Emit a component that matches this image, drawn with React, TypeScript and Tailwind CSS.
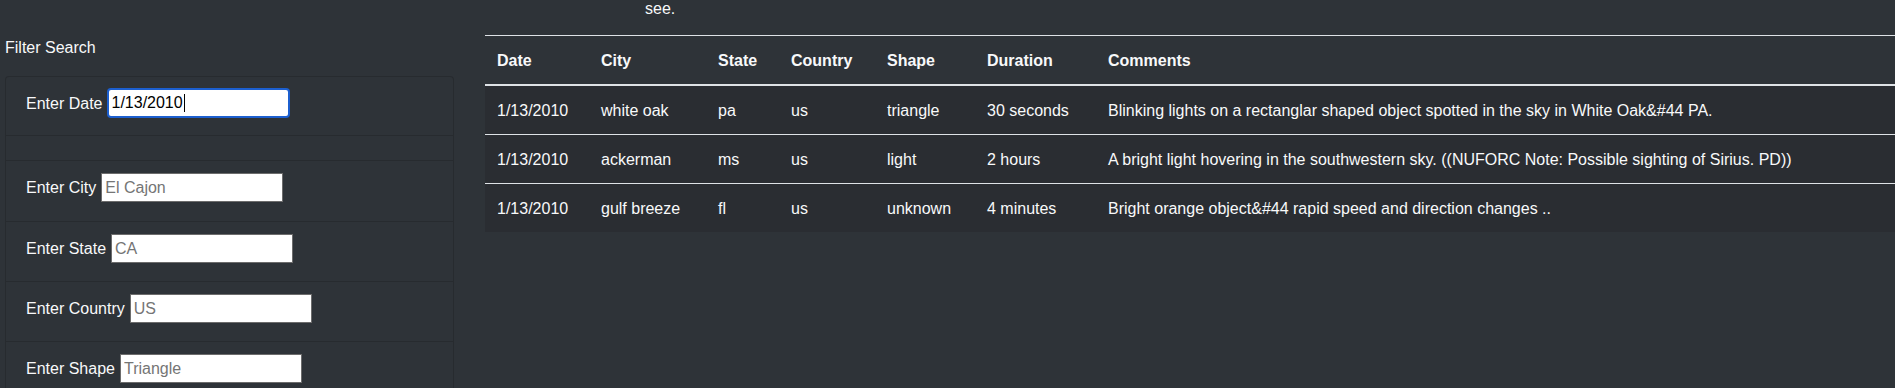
import React from 'react'

// Filter fields shown in the left list below the date row
const filters = [
  { label: 'Enter City', placeholder: 'El Cajon', h: 'h-[61px]' },
  { label: 'Enter State', placeholder: 'CA', h: 'h-[60px]' },
  { label: 'Enter Country', placeholder: 'US', h: 'h-[60px]' },
  { label: 'Enter Shape', placeholder: 'Triangle', h: 'h-[60px]' },
]

const sightings = [
  {
    date: '1/13/2010',
    city: 'white oak',
    state: 'pa',
    country: 'us',
    shape: 'triangle',
    duration: '30 seconds',
    comments: 'Blinking lights on a rectanglar shaped object spotted in the sky in White Oak&#44 PA.',
  },
  {
    date: '1/13/2010',
    city: 'ackerman',
    state: 'ms',
    country: 'us',
    shape: 'light',
    duration: '2 hours',
    comments: 'A bright light hovering in the southwestern sky. ((NUFORC Note: Possible sighting of Sirius. PD))',
  },
  {
    date: '1/13/2010',
    city: 'gulf breeze',
    state: 'fl',
    country: 'us',
    shape: 'unknown',
    duration: '4 minutes',
    comments: 'Bright orange object&#44 rapid speed and direction changes ..',
  },
]

export default function App() {
  return (
    <div
      className="h-[388px] w-full overflow-hidden bg-[#2e3338] text-[#f8f9fa] text-base"
      style={{ fontFamily: '"Liberation Sans", Arial, sans-serif' }}
    >
      <div className="flex">
        {/* Sidebar filters */}
        <div className="w-[485px] shrink-0 pl-[5px]">
          <div className="mt-[36px] leading-6">Filter Search</div>
          <ul className="mt-[16px] w-[449px] rounded-t-[4px] border border-b-0 border-[#272b2f]">
            <li className="flex h-[58px] items-start pl-5 pt-[11px]">
              <label className="leading-6 mt-[4px]">Enter Date</label>
              <div className="ml-[5px] flex h-[30px] w-[183px] items-center rounded-[4px] border-2 border-[#1c5fcf] bg-white pl-[2px] text-black leading-5">
                1/13/2010
                <span className="ml-[1px] inline-block h-[18px] w-px bg-black" />
              </div>
            </li>
            <li className="h-[25px] border-t border-[#272b2f]" />
            {filters.map((f) => (
              <li
                key={f.label}
                className={`${f.h} flex items-start border-t border-[#272b2f] pl-5 pt-3`}
              >
                <label className="leading-6 mt-[3px]">{f.label}</label>
                <input
                  type="text"
                  placeholder={f.placeholder}
                  className="ml-[5px] h-[29px] w-[182px] border border-[#6c6c6c] bg-white px-[3px] pt-[1px] text-black placeholder:text-[#757575] outline-none"
                  style={{ fontFamily: '"Liberation Sans", Arial, sans-serif' }}
                />
              </li>
            ))}
          </ul>
        </div>

        {/* Results */}
        <div className="flex-1">
          <p className="-mt-[3px] h-[38px] pl-[160px] leading-6">see.</p>
          <table className="w-full border-collapse text-left">
            <thead>
              <tr className="border-t border-[#dee2e6]">
                <th className="w-[104px] border-b-2 border-[#dee2e6] px-3 pt-[13px] pb-[11px] font-bold leading-6">Date</th>
                <th className="w-[117px] border-b-2 border-[#dee2e6] px-3 pt-[13px] pb-[11px] font-bold leading-6">City</th>
                <th className="w-[73px] border-b-2 border-[#dee2e6] px-3 pt-[13px] pb-[11px] font-bold leading-6">State</th>
                <th className="w-[96px] border-b-2 border-[#dee2e6] px-3 pt-[13px] pb-[11px] font-bold leading-6">Country</th>
                <th className="w-[100px] border-b-2 border-[#dee2e6] px-3 pt-[13px] pb-[11px] font-bold leading-6">Shape</th>
                <th className="w-[121px] border-b-2 border-[#dee2e6] px-3 pt-[13px] pb-[11px] font-bold leading-6">Duration</th>
                <th className="border-b-2 border-[#dee2e6] px-3 pt-[13px] pb-[11px] font-bold leading-6">Comments</th>
              </tr>
            </thead>
            <tbody className="bg-[#2a2d32]">
              {sightings.map((s, i) => (
                <tr key={i} className={i > 0 ? 'border-t border-[#dee2e6]' : ''}>
                  <td className="px-3 pt-[13px] pb-[11px] leading-6">{s.date}</td>
                  <td className="px-3 pt-[13px] pb-[11px] leading-6">{s.city}</td>
                  <td className="px-3 pt-[13px] pb-[11px] leading-6">{s.state}</td>
                  <td className="px-3 pt-[13px] pb-[11px] leading-6">{s.country}</td>
                  <td className="px-3 pt-[13px] pb-[11px] leading-6">{s.shape}</td>
                  <td className="px-3 pt-[13px] pb-[11px] leading-6">{s.duration}</td>
                  <td className="px-3 pt-[13px] pb-[11px] leading-6">{s.comments}</td>
                </tr>
              ))}
            </tbody>
          </table>
        </div>
      </div>
    </div>
  )
}
